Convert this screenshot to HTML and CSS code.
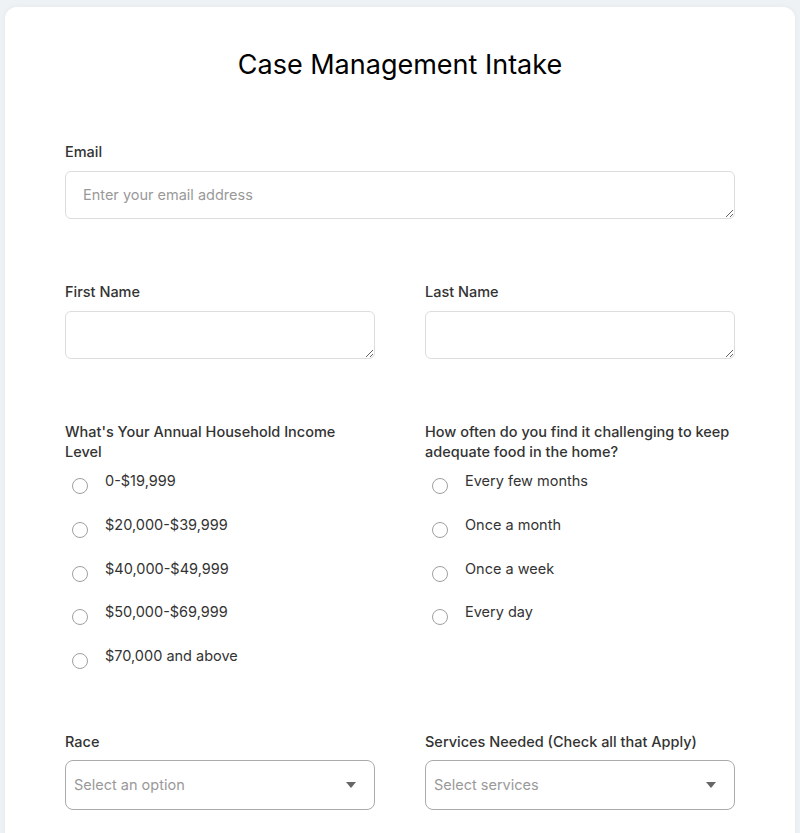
FILE: index.html
```html
<!DOCTYPE html>
<html lang="en">
<head>
    <meta charset="UTF-8">
    <meta name="viewport" content="width=device-width, initial-scale=1.0">
    <title>Case Management Intake</title>
    <link rel="stylesheet" href="styles.css">
</head>
<body>

    <form class="intake-card" id="intakeForm">
        <h1 class="form-title">Case Management Intake</h1>

        <div class="field">
            <label class="field-label" for="email">Email</label>
            <textarea class="text-input" id="email" name="email" rows="1" placeholder="Enter your email address"></textarea>
        </div>

        <div class="field-row">
            <div class="field">
                <label class="field-label" for="firstName">First Name</label>
                <textarea class="text-input" id="firstName" name="firstName" rows="1"></textarea>
            </div>
            <div class="field">
                <label class="field-label" for="lastName">Last Name</label>
                <textarea class="text-input" id="lastName" name="lastName" rows="1"></textarea>
            </div>
        </div>

        <div class="field-row radio-row">
            <div class="field">
                <span class="field-label">What's Your Annual Household Income Level</span>
                <div class="radio-list">
                    <label class="radio-option"><input type="radio" name="income"><span class="radio-dot"></span>0-$19,999</label>
                    <label class="radio-option"><input type="radio" name="income"><span class="radio-dot"></span>$20,000-$39,999</label>
                    <label class="radio-option"><input type="radio" name="income"><span class="radio-dot"></span>$40,000-$49,999</label>
                    <label class="radio-option"><input type="radio" name="income"><span class="radio-dot"></span>$50,000-$69,999</label>
                    <label class="radio-option"><input type="radio" name="income"><span class="radio-dot"></span>$70,000 and above</label>
                </div>
            </div>
            <div class="field">
                <span class="field-label">How often do you find it challenging to keep adequate food in the home?</span>
                <div class="radio-list">
                    <label class="radio-option"><input type="radio" name="food"><span class="radio-dot"></span>Every few months</label>
                    <label class="radio-option"><input type="radio" name="food"><span class="radio-dot"></span>Once a month</label>
                    <label class="radio-option"><input type="radio" name="food"><span class="radio-dot"></span>Once a week</label>
                    <label class="radio-option"><input type="radio" name="food"><span class="radio-dot"></span>Every day</label>
                </div>
            </div>
        </div>

        <div class="field-row">
            <div class="field">
                <span class="field-label">Race</span>
                <div class="select-box">
                    <span class="select-placeholder">Select an option</span>
                    <span class="select-arrow"></span>
                </div>
            </div>
            <div class="field">
                <span class="field-label">Services Needed (Check all that Apply)</span>
                <div class="select-box">
                    <span class="select-placeholder">Select services</span>
                    <span class="select-arrow"></span>
                </div>
            </div>
        </div>
    </form>

</body>
</html>
```

FILE: styles.css
```css
body {
    margin: 0;
    padding: 7px 5px 40px;
    font-family: Inter, "Noto Sans", Arial, sans-serif;
    background-color: #eef2f4;
    color: #333;
}
.intake-card {
    background-color: white;
    border-radius: 12px;
    padding: 42px 60px 60px;
    box-shadow: 0 0 6px rgba(0, 0, 0, 0.04);
}
.form-title {
    margin: 0 0 61px;
    font-size: 27px;
    line-height: 32px;
    font-weight: 400;
    text-align: center;
    color: #000;
}
.field {
    display: flex;
    flex-direction: column;
    margin-bottom: 63px;
}
.field-row {
    display: grid;
    grid-template-columns: 1fr 1fr;
    column-gap: 50px;
}
.field-label {
    font-size: 14.5px;
    line-height: 20px;
    font-weight: 500;
    color: #333;
    margin-bottom: 9px;
}
.text-input {
    height: 48px;
    padding: 13px 17px;
    border: 1px solid #ddd;
    border-radius: 6px;
    font-family: inherit;
    font-size: 14.5px;
    line-height: 20px;
    box-sizing: border-box;
    resize: vertical;
    outline: none;
}
.text-input::placeholder {
    color: #999;
}
.radio-row .field {
    margin-bottom: 42px;
}
.radio-list {
    display: flex;
    flex-direction: column;
}
.radio-option {
    display: flex;
    align-items: flex-start;
    height: 43.75px;
    padding-left: 7px;
    font-size: 14.5px;
    line-height: 20px;
    color: #333;
    cursor: pointer;
}
.radio-option input {
    display: none;
}
.radio-dot {
    width: 16px;
    height: 16px;
    margin-top: 7px;
    margin-right: 17px;
    border: 1.5px solid #a0a0a0;
    border-radius: 50%;
    box-sizing: border-box;
    flex-shrink: 0;
}
.select-box {
    display: flex;
    align-items: center;
    justify-content: space-between;
    height: 50px;
    margin-top: -1px;
    padding: 0 18px 0 8px;
    border: 1px solid #aaa;
    border-radius: 8px;
    box-sizing: border-box;
}
.select-placeholder {
    font-size: 14.5px;
    color: #999;
}
.select-arrow {
    width: 0;
    height: 0;
    border-left: 5.5px solid transparent;
    border-right: 5.5px solid transparent;
    border-top: 6px solid #666;
}
```
